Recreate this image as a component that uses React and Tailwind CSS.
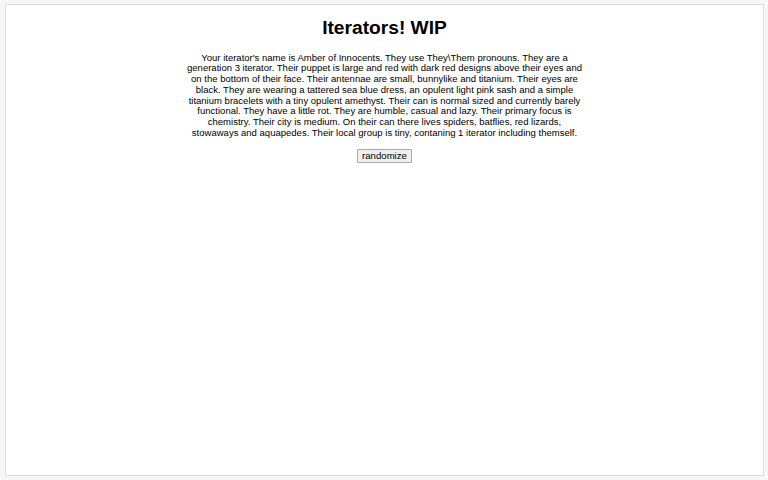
export default function App() {
  return (
    <div className="h-[480px] w-full bg-[#f6f6f6] pt-[4px] pl-[5px] pr-[4px] pb-[4px] font-['Liberation_Sans',Arial,sans-serif] text-black">
      <div className="h-full border border-[#dedede] bg-white flex flex-col items-center pt-[12px]">
        <h1 className="text-[19.2px] leading-[22px] font-bold">Iterators! WIP</h1>
        <p className="mt-[13.5px] w-[400px] text-center text-[9.52px] leading-[10.8px]">
          Your iterator's name is Amber of Innocents. They use They\Them pronouns. They are a generation 3 iterator. Their puppet is large and red with dark red designs above their eyes and on the bottom of their face. Their antennae are small, bunnylike and titanium. Their eyes are black. They are wearing a tattered sea blue dress, an opulent light pink sash and a simple titanium bracelets with a tiny opulent amethyst. Their can is normal sized and currently barely functional. They have a little rot. They are humble, casual and lazy. Their primary focus is chemistry. Their city is medium. On their can there lives spiders, batflies, red lizards, stowaways and aquapedes. Their local group is tiny, contaning 1 iterator including themself.
        </p>
        <button className="mt-[10.5px] h-[14px] px-[4px] border border-[#a9a9a9] bg-[#efefef] text-[9.6px] leading-[12px] rounded-[1px]">
          randomize
        </button>
      </div>
    </div>
  )
}
